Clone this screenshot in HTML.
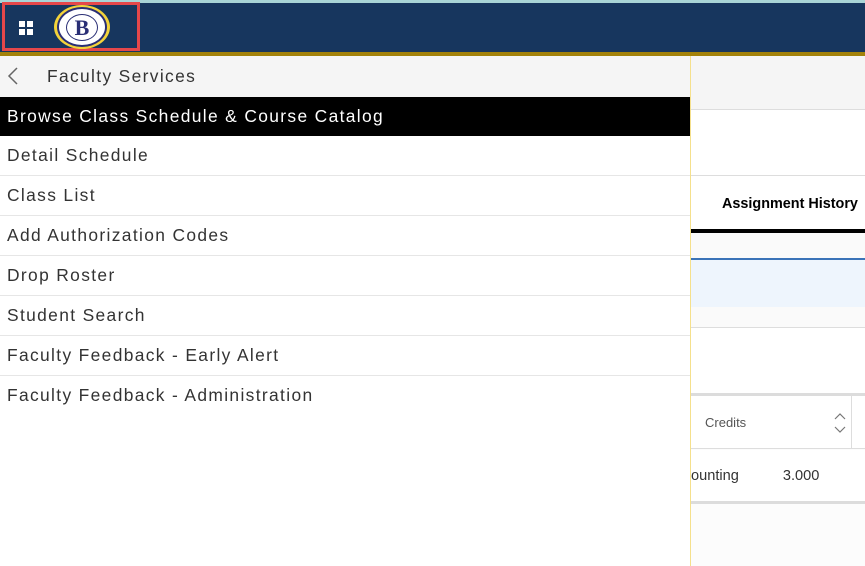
<!DOCTYPE html>
<html><head><style>
*{margin:0;padding:0;box-sizing:border-box}
body{width:865px;height:566px;overflow:hidden;background:#fcfcfc;font-family:"Liberation Sans",sans-serif;position:relative}
.abs{position:absolute}
.menu div.it{height:40px;border-bottom:1px solid #e6e6e6;font-size:17.4px;letter-spacing:1.35px;color:#333;padding-left:7px;line-height:38px;background:#fff}
</style></head><body>
<div class="abs" style="left:0;top:0;width:865px;height:53px;background:#17365e"></div>
<div class="abs" style="left:0;top:0;width:865px;height:3px;background:#a9d4d6"></div>
<div class="abs" style="left:0;top:52px;width:865px;height:4px;background:#a3820a"></div>
<div class="abs" style="left:2px;top:2px;width:138px;height:49px;border:3px solid #e5474a"></div>
<div class="abs" style="left:19px;top:21px;width:6px;height:6px;background:#fff"></div>
<div class="abs" style="left:27px;top:21px;width:6px;height:6px;background:#fff"></div>
<div class="abs" style="left:19px;top:29px;width:6px;height:6px;background:#fff"></div>
<div class="abs" style="left:27px;top:29px;width:6px;height:6px;background:#fff"></div>
<div class="abs" style="left:54px;top:5px;width:56px;height:44px;border-radius:50%;background:#f3d33a"></div>
<div class="abs" style="left:57px;top:7px;width:50px;height:40px;border-radius:50%;background:#fff;border:2px solid #2a2f75"></div>
<div class="abs" style="left:66px;top:14px;width:32px;height:27px;border-radius:50%;background:#fff;border:1px solid #2a2f75;font:bold 22px 'Liberation Serif',serif;color:#2a2f75;text-align:center;line-height:25px">B</div>

<div class="abs" style="left:690px;top:56px;width:175px;height:54px;background:#f5f5f5;border-bottom:1px solid #ddd"></div>
<div class="abs" style="left:690px;top:110px;width:175px;height:66px;background:#fff;border-bottom:1px solid #ddd"></div>
<div class="abs" style="left:690px;top:176px;width:175px;height:53px;background:#fff;font-weight:bold;font-size:14.4px;color:#000;padding:20px 0 0 32px">Assignment History</div>
<div class="abs" style="left:690px;top:229px;width:175px;height:4px;background:#000"></div>
<div class="abs" style="left:690px;top:233px;width:175px;height:25px;background:#fafafa"></div>
<div class="abs" style="left:690px;top:258px;width:175px;height:2px;background:#3a73b8"></div>
<div class="abs" style="left:690px;top:260px;width:175px;height:47px;background:#eef5fd"></div>
<div class="abs" style="left:690px;top:307px;width:175px;height:21px;background:#fafafa;border-bottom:1px solid #ddd"></div>
<div class="abs" style="left:690px;top:328px;width:175px;height:65px;background:#fff"></div>
<div class="abs" style="left:690px;top:393px;width:175px;height:3px;background:#dcdcdc"></div>
<div class="abs" style="left:690px;top:396px;width:175px;height:53px;background:#fff;border-bottom:1px solid #ddd;font-size:13px;color:#555;padding:19px 0 0 15px">Credits</div>
<svg class="abs" style="left:833px;top:412px" width="14" height="22" viewBox="0 0 14 22"><path d="M2 7 L7 2 L12 7 M2 15 L7 20 L12 15" fill="none" stroke="#777" stroke-width="1.2"/></svg>
<div class="abs" style="left:851px;top:396px;width:1px;height:53px;background:#ddd"></div>
<div class="abs" style="left:690px;top:450px;width:175px;height:51px;background:#fff;font-size:14.6px;color:#333;padding:18px 0 0 1px">ounting<span style="margin-left:44px">3.000</span></div>
<div class="abs" style="left:690px;top:501px;width:175px;height:3px;background:#dcdcdc"></div>
<div class="abs" style="left:690px;top:56px;width:1px;height:510px;background:#f5e08c"></div>

<div class="abs menu" style="left:0;top:56px;width:690px">
<div style="height:41px;background:#f5f5f5;font-size:17.4px;letter-spacing:1.35px;color:#333;line-height:40px;padding-left:47px;position:relative"><svg style="position:absolute;left:7px;top:11px" width="12" height="18" viewBox="0 0 12 18"><path d="M10 1 L2 9 L10 17" fill="none" stroke="#666" stroke-width="1.5"/></svg>Faculty Services</div>
<div style="height:39px;background:#000;color:#fff;font-size:17.4px;letter-spacing:1.35px;line-height:39px;padding-left:7px">Browse Class Schedule &amp; Course Catalog</div>
<div class="it">Detail Schedule</div>
<div class="it">Class List</div>
<div class="it">Add Authorization Codes</div>
<div class="it">Drop Roster</div>
<div class="it">Student Search</div>
<div class="it">Faculty Feedback - Early Alert</div>
<div class="it">Faculty Feedback - Administration</div>
</div>
<div class="abs" style="left:0;top:414px;width:690px;height:152px;background:#fff"></div>
</body></html>
